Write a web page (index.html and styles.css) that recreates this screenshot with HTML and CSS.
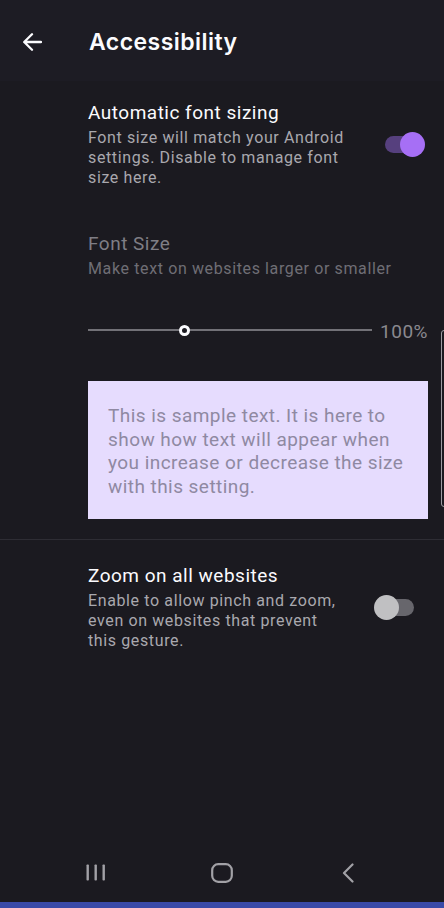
FILE: index.html
```html
<!DOCTYPE html>
<html lang="en">
<head>
  <meta charset="UTF-8">
  <meta name="viewport" content="width=device-width, initial-scale=1.0">
  <title>Accessibility</title>
  <link rel="stylesheet" href="styles.css">
</head>
<body>
  <div class="screen">
    <header class="toolbar">
      <svg class="back" width="20" height="20" viewBox="0 0 20 20">
        <path d="M19 10H2.5M10 2.2L2.2 10L10 17.8" fill="none" stroke="#fbfbfe" stroke-width="2.3" stroke-linecap="round" stroke-linejoin="round"/>
      </svg>
      <div class="title">Accessibility</div>
    </header>

    <main class="prefs">
      <div class="pref">
        <div class="pref-text">
          <div class="pref-title">Automatic font sizing</div>
          <div class="pref-summary">Font size will match your Android settings. Disable to manage font size here.</div>
        </div>
        <div class="switch on"><span class="track"></span><span class="thumb"></span></div>
      </div>

      <div class="pref disabled">
        <div class="pref-text">
          <div class="pref-title">Font Size</div>
          <div class="pref-summary">Make text on websites larger or smaller</div>
        </div>
      </div>

      <div class="slider-row">
        <div class="slider">
          <span class="slider-thumb" style="left: 34%"></span>
        </div>
        <div class="slider-value">100%</div>
      </div>

      <div class="sample">This is sample text. It is here to show how text will appear when you increase or decrease the size with this setting.</div>

      <div class="divider"></div>

      <div class="pref pref-zoom">
        <div class="pref-text">
          <div class="pref-title">Zoom on all websites</div>
          <div class="pref-summary">Enable to allow pinch and zoom, even on websites that prevent this gesture.</div>
        </div>
        <div class="switch"><span class="track"></span><span class="thumb"></span></div>
      </div>

      <div class="fast-scroll"></div>
    </main>

    <nav class="navbar">
      <svg width="20" height="17" viewBox="0 0 20 17">
        <rect x="0.5" y="0.5" width="2.4" height="16" rx="0.8" fill="#a2a1a6"/>
        <rect x="8.5" y="0.5" width="2.4" height="16" rx="0.8" fill="#a2a1a6"/>
        <rect x="16.5" y="0.5" width="2.4" height="16" rx="0.8" fill="#a2a1a6"/>
      </svg>
      <svg width="22" height="20" viewBox="0 0 22 20">
        <rect x="1.2" y="1.2" width="19.6" height="17.6" rx="6" fill="none" stroke="#a2a1a6" stroke-width="2.2"/>
      </svg>
      <svg width="12" height="20" viewBox="0 0 12 20">
        <path d="M10.5 1.5L2 10L10.5 18.5" fill="none" stroke="#a2a1a6" stroke-width="2.2" stroke-linecap="round" stroke-linejoin="round"/>
      </svg>
    </nav>
    <div class="gesture-bar"></div>
  </div>
</body>
</html>
```

FILE: styles.css
```css
*{
  box-sizing: border-box;
}
body{
  margin: 0;
  background: #1b1a20;
  font-family: Roboto, "Liberation Sans", sans-serif;
  color: #fbfbfe;
}
.screen{
  width: 444px;
  height: 908px;
  display: flex;
  flex-direction: column;
  overflow: hidden;
}

/* toolbar */
.toolbar{
  height: 81px;
  flex: none;
  display: flex;
  align-items: center;
  padding-left: 22px;
  padding-top: 2px;
  background: #1d1c24;
}
.back{
  flex: none;
}
.title{
  margin-left: 47px;
  font-family: Inter, "Open Sans", sans-serif;
  font-weight: 600;
  font-size: 23px;
  letter-spacing: 0.45px;
}

/* preferences */
.prefs{
  flex: 1;
  position: relative;
}
.pref{
  display: flex;
  align-items: center;
  padding: 20px 22px 24px 88px;
}
.pref-text{
  flex: 1;
  margin-right: 27px;
}
.pref-title{
  font-size: 19px;
  line-height: 24px;
  letter-spacing: 0.5px;
}
.pref-summary{
  margin-top: 3px;
  font-size: 16px;
  line-height: 20px;
  letter-spacing: 0.62px;
  color: #a9a8ae;
}
.disabled .pref-title{
  color: #7f7e85;
}
.disabled .pref-summary{
  color: #6f6e75;
}
.pref-zoom{
  padding-top: 24px;
}

/* switches */
.switch{
  position: relative;
  width: 48px;
  height: 26px;
  flex: none;
}
.track{
  position: absolute;
  left: 8px;
  top: 4.5px;
  width: 32px;
  height: 17px;
  border-radius: 9px;
  background: #67666c;
}
.thumb{
  position: absolute;
  left: 0;
  top: 0.5px;
  width: 25px;
  height: 25px;
  border-radius: 50%;
  background: #c0c0c2;
}
.switch.on{
  margin-right: -3px;
}
.switch.on .track{
  background: #56407e;
}
.switch.on .thumb{
  left: auto;
  right: 0;
  background: #a66ff5;
}

/* slider */
.slider-row{
  display: flex;
  align-items: center;
  height: 42px;
  margin-top: 6px;
  padding: 0 16px 0 88px;
}
.slider{
  flex: 1;
  height: 2px;
  background: #727177;
  position: relative;
}
.slider-thumb{
  position: absolute;
  top: -4.5px;
  width: 11px;
  height: 11px;
  margin-left: -5.5px;
  border-radius: 50%;
  border: 3px solid #fbfbfe;
  background: #1b1a20;
}
.slider-value{
  margin-left: 8px;
  padding-top: 3px;
  font-size: 19px;
  letter-spacing: 0.5px;
  color: #8a898f;
}

/* sample text */
.sample{
  margin: 30px 16px 0 88px;
  padding: 23px 14px 21px 20px;
  background: #e6dcfe;
  color: #8f89a2;
  font-size: 19px;
  line-height: 23.5px;
  letter-spacing: 0.45px;
}

.divider{
  height: 1px;
  margin-top: 20px;
  background: #2e2d34;
}

.fast-scroll{
  position: absolute;
  right: -3px;
  top: 249px;
  width: 6px;
  height: 177px;
  border-radius: 3px;
  border: 1.5px solid #9e9da3;
}

/* system navigation */
.navbar{
  height: 62px;
  flex: none;
  display: grid;
  grid-template-columns: repeat(3, 126px);
  justify-content: center;
  justify-items: center;
  align-items: center;
  padding-top: 3px;
}
.gesture-bar{
  height: 6px;
  flex: none;
  background: #3a4aa8;
}
```
